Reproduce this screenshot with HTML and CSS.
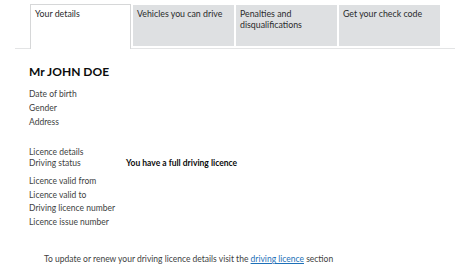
FILE: index.html
```html
<!DOCTYPE html>
<html lang="en">
<head>
<meta charset="utf-8">
<title>Your details</title>
<link rel="stylesheet" href="styles.css">
</head>
<body>
<ul class="tabs">
  <li class="tab active">Your details</li>
  <li class="tab">Vehicles you can drive</li>
  <li class="tab">Penalties and disqualifications</li>
  <li class="tab">Get your check code</li>
</ul>
<main class="panel">
  <h1 class="name">Mr JOHN DOE</h1>
  <dl class="list personal">
    <dt>Date of birth</dt><dd></dd>
    <dt>Gender</dt><dd></dd>
    <dt>Address</dt><dd></dd>
  </dl>
  <dl class="list status">
    <dt>Licence details</dt><dd></dd>
    <dt>Driving status</dt><dd class="strong">You have a full driving licence</dd>
  </dl>
  <dl class="list licence">
    <dt>Licence valid from</dt><dd></dd>
    <dt>Licence valid to</dt><dd></dd>
    <dt>Driving licence number</dt><dd></dd>
    <dt>Licence issue number</dt><dd></dd>
  </dl>
  <p class="note">To update or renew your driving licence details visit the <a href="#">driving licence</a> section</p>
</main>
</body>
</html>
```
FILE: styles.css
```css
* { box-sizing: border-box; }
body {
  margin: 0;
  font-family: Lato, "Noto Sans", Arial, sans-serif;
  color: #0b0c0c;
  background: #fff;
  font-size: 8.5px;
}
.tabs {
  list-style: none;
  margin: 0 19px 0 15px;
  padding: 4px 0 0 15px;
  display: flex;
  align-items: flex-start;
  gap: 2px;
  border-bottom: 1px solid #e3e4e5;
  height: 49px;
}
.tab {
  width: 101px;
  height: 41px;
  margin-top: 1px;
  background: #dee0e2;
  padding: 3px 5px 0 4px;
  line-height: 11px;
  font-size: 8.8px;
  color: #2a2b2c;
}
.tab.active {
  background: #fff;
  height: 45px;
  margin-top: 0;
  border: 1px solid #d6d7d8;
  border-bottom: none;
  padding: 3px 4px 0 4px;
}
.panel {
  padding: 0 0 0 29px;
}
.name {
  margin: 15px 0 7px;
  font-size: 12px;
  line-height: 16px;
  font-weight: 700;
}
.list {
  margin: 0;
  display: grid;
  grid-template-columns: 97px 1fr;
  color: #404141;
}
.list dt, .list dd { margin: 0; }
.personal { line-height: 14px; }
.status { margin-top: 18px; line-height: 11px; }
.licence { margin-top: 6px; line-height: 13.5px; }
.strong { font-weight: 700; color: #0b0c0c; }
.note {
  margin: 24px 0 0 15px;
  line-height: 12px;
  color: #404141;
}
.note a { color: #1d70b8; text-decoration: underline; }
```
